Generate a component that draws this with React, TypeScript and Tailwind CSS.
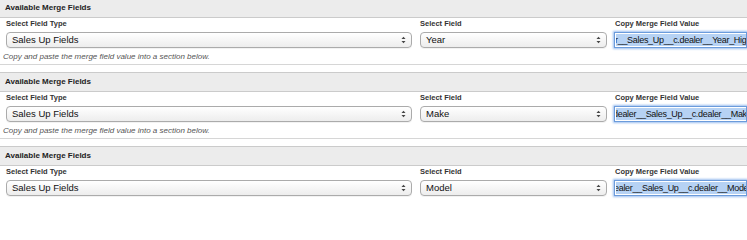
import React from "react";

const font = { fontFamily: '"Liberation Sans", Arial, sans-serif' };

function Arrows() {
  return (
    <svg width="5" height="8" viewBox="0 0 5 8" className="shrink-0">
      <path d="M0.5 3 L2.5 0.8 L4.5 3 Z" fill="#444" />
      <path d="M0.5 5 L2.5 7.2 L4.5 5 Z" fill="#444" />
    </svg>
  );
}

function FakeSelect({ value, className }: { value: string; className: string }) {
  return (
    <div
      className={`h-[16px] flex items-center justify-between pl-[5px] pr-[5px] rounded-[4px] border border-[#ababab] bg-gradient-to-b from-white to-[#ededed] shadow-[0_1px_0_rgba(0,0,0,0.05)] text-[9.5px] text-[#111] ${className}`}
    >
      <span className="leading-none">{value}</span>
      <Arrows />
    </div>
  );
}

function Section({ field, text, shift }: { field: string; text: string; shift: string }) {
  return (
    <div className="mb-[7px]">
      <div className="h-[20px] border-t border-b border-[#cbcbcb] bg-[#ececec] flex items-center pl-[5px]">
        <span className="text-[8px] font-bold text-[#222] leading-none">Available Merge Fields</span>
      </div>
      <div className="border-b border-[#d6d6d6] pb-[2px]">
        <div className="flex pl-[6px]">
          <div className="w-[407px] shrink-0">
            <div className="mt-[1px] h-[10px] leading-[10px] text-[7.5px] font-bold text-[#333]">Select Field Type</div>
            <FakeSelect value="Sales Up Fields" className="mt-[3px] w-[406px]" />
          </div>
          <div className="w-[188px] shrink-0 ml-[7px]">
            <div className="mt-[1px] h-[10px] leading-[10px] text-[7.5px] font-bold text-[#333]">Select Field</div>
            <FakeSelect value={field} className="mt-[3px] w-[187px]" />
          </div>
          <div className="flex-1 ml-[6px] min-w-0">
            <div className="mt-[1px] h-[10px] leading-[10px] text-[7.5px] font-bold text-[#333] pl-[1px]">Copy Merge Field Value</div>
            <div className="mt-[3px] h-[16px] border border-[#6b9bdb] shadow-[0_0_2px_1px_#9cbfef] bg-white overflow-hidden flex items-center pl-[1px]">
              <div className="h-[12px] w-full bg-[#b6d2f4] overflow-hidden whitespace-nowrap flex items-center">
                <span className={`text-[9px] tracking-[-0.3px] text-[#111] leading-none ${shift}`}>{text}</span>
              </div>
            </div>
          </div>
        </div>
        <div className="mt-[4px] h-[10px] leading-[10px] pl-[3px] text-[8px] italic text-[#555]">
          Copy and paste the merge field value into a section below.
        </div>
      </div>
    </div>
  );
}

export default function App() {
  return (
    <div className="w-[747px] h-[200px] overflow-hidden bg-white" style={font}>
      <div className="-mt-[2px]">
        <Section field="Year" text="r__Sales_Up__c.dealer__Year_High__c}" shift="-ml-[1px]" />
        <Section field="Make" text="dealer__Sales_Up__c.dealer__Make__c}" shift="-ml-[3px]" />
        <Section field="Model" text="ealer__Sales_Up__c.dealer__Model__c}" shift="-ml-[2px]" />
      </div>
    </div>
  );
}
